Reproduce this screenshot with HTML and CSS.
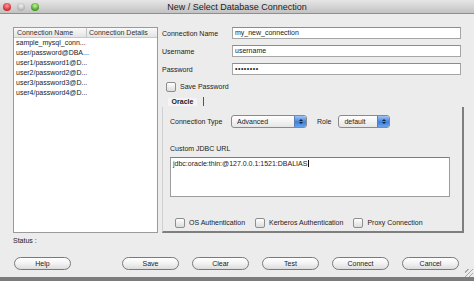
FILE: index.html
```html
<!DOCTYPE html>
<html lang="en">
<head>
  <meta charset="UTF-8" />
  <title>New / Select Database Connection</title>
  <link rel="stylesheet" href="styles.css">
</head>
<body>
  <div class="window">
    <div class="titlebar">
      <div class="lights">
        <span class="light red"></span>
        <span class="light gray"></span>
        <span class="light green"></span>
      </div>
      <div class="title">New / Select Database Connection</div>
      <div></div>
    </div>

    <div class="main">
      <div class="conn-list">
        <div class="list-head">
          <div class="col-name">Connection Name</div>
          <div class="col-details">Connection Details</div>
        </div>
        <div class="list-row">sample_mysql_conn...</div>
        <div class="list-row">user/password@DBA...</div>
        <div class="list-row">user1/password1@D...</div>
        <div class="list-row">user2/password2@D...</div>
        <div class="list-row">user3/password3@D...</div>
        <div class="list-row">user4/password4@D...</div>
      </div>

      <div class="form">
        <div class="fields">
          <label>Connection Name</label>
          <div class="field">my_new_connection</div>
          <label>Username</label>
          <div class="field">username</div>
          <label>Password</label>
          <div class="field dots">&#8226;&#8226;&#8226;&#8226;&#8226;&#8226;&#8226;&#8226;</div>
        </div>

        <div class="check save-pw">
          <span class="box"></span>
          <span>Save Password</span>
        </div>

        <div class="tabs">
          <div class="tab">Oracle</div>
          <div class="tab-sep"></div>
        </div>

        <div class="panel">
          <div class="type-row">
            <span class="lbl-type">Connection Type</span>
            <div class="select sel-adv">
              <span class="sel-text">Advanced</span>
              <span class="stepper"><i class="up"></i><i class="down"></i></span>
            </div>
            <span class="lbl-role">Role</span>
            <div class="select sel-role">
              <span class="sel-text">default</span>
              <span class="stepper"><i class="up"></i><i class="down"></i></span>
            </div>
          </div>

          <div class="url-label">Custom JDBC URL</div>
          <div class="url-box"><span class="caret">jdbc:oracle:thin:@127.0.0.1:1521:DBALIAS</span></div>

          <div class="auth-row">
            <div class="check"><span class="box"></span><span>OS Authentication</span></div>
            <div class="check"><span class="box"></span><span>Kerberos Authentication</span></div>
            <div class="check"><span class="box"></span><span>Proxy Connection</span></div>
          </div>
        </div>
      </div>
    </div>

    <div class="status">Status :</div>

    <div class="buttons">
      <button class="btn">Help</button>
      <div class="btn-group">
        <button class="btn">Save</button>
        <button class="btn">Clear</button>
        <button class="btn">Test</button>
        <button class="btn">Connect</button>
        <button class="btn">Cancel</button>
      </div>
      <div class="grip"></div>
    </div>

    <div class="bottom-band"></div>
  </div>
</body>
</html>
```

FILE: styles.css
```css
body {
  margin: 0;
  font-family: "Liberation Sans", Arial, sans-serif;
  font-size: 7px;
  color: #1a1a1a;
  background-color: #ececec;
}
.window {
  width: 474px;
  height: 281px;
  display: flex;
  flex-direction: column;
  background-color: #ececec;
  overflow: hidden;
}
.titlebar {
  height: 13px;
  display: grid;
  grid-template-columns: 60px 1fr 60px;
  align-items: center;
  background: linear-gradient(#e6e6e6, #c2c2c2);
  border-bottom: 1px solid #8e8e8e;
}
.lights {
  display: flex;
  gap: 6px;
  padding-left: 3px;
}
.light {
  width: 8px;
  height: 8px;
  border-radius: 50%;
}
.red {
  background: radial-gradient(circle at 50% 35%, #ff9a9a, #d0262a 70%);
}
.gray {
  background: radial-gradient(circle at 50% 35%, #f2f2f2, #b0b0b0 70%);
}
.green {
  background: radial-gradient(circle at 50% 35%, #c8f5a0, #3d9a1e 70%);
}
.title {
  text-align: center;
  font-size: 9px;
  color: #222;
}
.main {
  display: flex;
  margin-top: 13px;
  height: 206px;
}
.conn-list {
  margin-left: 13px;
  width: 143px;
  background-color: #fff;
  border: 1px solid #9a9a9a;
}
.list-head {
  display: flex;
  height: 9px;
  line-height: 9px;
  background: linear-gradient(#fafafa, #e4e4e4);
  border-bottom: 1px solid #c8c8c8;
  color: #333;
}
.col-name {
  width: 69px;
  padding-left: 3px;
  border-right: 1px solid #c4c4c4;
}
.col-details {
  padding-left: 2px;
}
.list-row {
  height: 10px;
  line-height: 10px;
  padding-left: 2px;
  color: #222;
}
.form {
  margin-left: 4px;
  width: 302px;
  display: flex;
  flex-direction: column;
}
.fields {
  display: grid;
  grid-template-columns: 70px 229px;
  row-gap: 6px;
  align-items: center;
}
.field {
  height: 10px;
  line-height: 10px;
  background-color: #fff;
  border: 1px solid #a6a6a6;
  border-top-color: #8c8c8c;
  padding-left: 2px;
  color: #222;
}
.dots {
  letter-spacing: 0.5px;
}
.check {
  display: flex;
  align-items: center;
  gap: 4px;
  color: #222;
}
.box {
  width: 8px;
  height: 8px;
  border: 1px solid #8e8e8e;
  border-radius: 2px;
  background: linear-gradient(#ffffff, #dcdcdc);
}
.save-pw {
  margin-top: 7px;
  margin-left: 4px;
  height: 9px;
}
.tabs {
  display: flex;
  align-items: center;
  margin-top: 6px;
  height: 9px;
}
.tab {
  margin-left: 6px;
  width: 29px;
  height: 8px;
  line-height: 8px;
  text-align: center;
  font-weight: bold;
  background-color: #f4f4f4;
  color: #222;
}
.tab-sep {
  margin-left: 6px;
  width: 1px;
  height: 9px;
  background-color: #555;
}
.panel {
  flex: 1;
  margin-top: 1px;
  padding: 8px 0 0 7px;
  border-left: 1px solid #d0d0d0;
  border-right: 2px solid #7e7e7e;
  border-bottom: 2px solid #7e7e7e;
  display: flex;
  flex-direction: column;
}
.type-row {
  display: flex;
  align-items: center;
  height: 13px;
}
.lbl-type {
  width: 61px;
}
.lbl-role {
  margin: 0 7px 0 10px;
}
.select {
  height: 11px;
  display: flex;
  border: 1px solid #8a8a8a;
  border-radius: 3px;
  background: linear-gradient(#ffffff, #e6e6e6);
  overflow: hidden;
}
.sel-adv {
  width: 74px;
}
.sel-role {
  width: 50px;
}
.sel-text {
  flex: 1;
  line-height: 11px;
  padding-left: 5px;
  color: #222;
}
.stepper {
  width: 11px;
  display: flex;
  flex-direction: column;
  align-items: center;
  justify-content: center;
  gap: 1px;
  background: linear-gradient(#9cc4f4, #3f7fdc 55%, #6aa2ec);
  border-left: 1px solid #5a7fb0;
}
.stepper i {
  width: 0;
  height: 0;
  border-left: 2px solid transparent;
  border-right: 2px solid transparent;
}
.stepper .up {
  border-bottom: 2px solid #10243f;
}
.stepper .down {
  border-top: 2px solid #10243f;
}
.url-label {
  margin-top: 16px;
  height: 9px;
  line-height: 9px;
}
.url-box {
  margin-top: 4px;
  width: 276px;
  height: 36px;
  padding: 2px 0 0 2px;
  background-color: #fff;
  border: 1px solid #9c9c9c;
  border-top-color: #7c7c7c;
  color: #222;
  line-height: 8px;
}
.caret {
  border-right: 1px solid #111;
  padding-right: 1px;
}
.auth-row {
  display: flex;
  gap: 10px;
  margin-top: 21px;
  margin-left: 5px;
  height: 9px;
}
.status {
  margin: 3px 0 0 13px;
  height: 9px;
  line-height: 9px;
  color: #222;
}
.buttons {
  display: flex;
  align-items: center;
  margin-top: 11px;
  height: 14px;
  padding-left: 14px;
  position: relative;
}
.btn-group {
  display: flex;
  gap: 13px;
  margin-left: 51px;
}
.btn {
  width: 57px;
  height: 13px;
  padding: 0;
  font-family: "Liberation Sans", Arial, sans-serif;
  font-size: 7px;
  color: #222;
  border: 1px solid #7a7a7a;
  border-radius: 7px;
  background: linear-gradient(#ffffff, #f2f2f2 50%, #dcdcdc);
}
.grip {
  position: absolute;
  right: 1px;
  bottom: -7px;
  width: 8px;
  height: 8px;
  background: repeating-linear-gradient(135deg, transparent 0 2px, #a8a8a8 2px 3px);
}
.bottom-band {
  margin-top: auto;
  height: 4px;
  background-color: #7c7c7c;
}
```
